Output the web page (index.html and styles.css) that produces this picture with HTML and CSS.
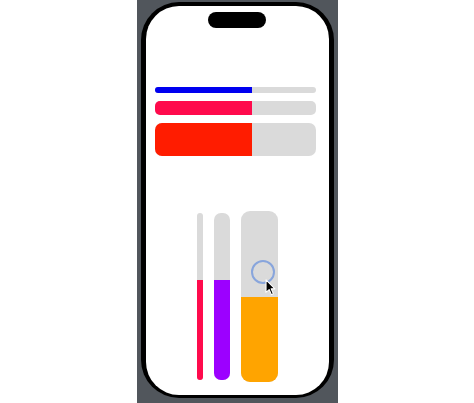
FILE: index.html
```html
<!DOCTYPE html>
<html lang="en">
<head>
  <meta charset="UTF-8">
  <meta name="viewport" content="width=device-width, initial-scale=1.0">
  <title>Progress Sliders</title>
  <link rel="stylesheet" href="styles.css">
</head>
<body>
  <div class="phone">
    <div class="bezel">
      <div class="screen">
        <div class="island"></div>

        <div class="bars">
          <div class="bar bar-thin"><div class="fill" style="width: 60%"></div></div>
          <div class="bar bar-medium"><div class="fill" style="width: 60%"></div></div>
          <div class="bar bar-large"><div class="fill" style="width: 60%"></div></div>
        </div>

        <div class="sliders">
          <div class="vslider vslider-thin"><div class="vfill" style="height: 60%"></div></div>
          <div class="vslider vslider-medium"><div class="vfill" style="height: 60%"></div></div>
          <div class="vslider vslider-large">
            <div class="vfill" style="height: 50%"></div>
            <div class="touch"></div>
            <svg class="pointer" width="11" height="17" viewBox="0 0 12 19">
              <path d="M1 1 L1 15 L4.5 11.8 L7 17.5 L9.2 16.5 L6.8 11 L11 11 Z" fill="#000" stroke="#fff" stroke-width="1.2" stroke-linejoin="round"></path>
            </svg>
          </div>
        </div>
      </div>
    </div>
  </div>
</body>
</html>
```

FILE: styles.css
```css
:root {
  --frame: #51565c;
  --track: #dadada;
  --blue: #0000f0;
  --pink: #ff0a4c;
  --red: #ff1c00;
  --purple: #9c00ff;
  --orange: #ffa400;
}

* {
  margin: 0;
  padding: 0;
  box-sizing: border-box;
}

body {
  background-color: #ffffff;
  height: 403px;
  overflow: hidden;
  font-family: 'Inter', sans-serif;
}

.phone {
  width: 201px;
  height: 403px;
  margin: 0 auto;
  padding: 2px 4px 5px;
  background-color: var(--frame);
}

.bezel {
  height: 100%;
  padding: 4px 5px 3px;
  background-color: #000000;
  border-radius: 38px;
}

.screen {
  height: 100%;
  background-color: #ffffff;
  border-radius: 33px;
  display: flex;
  flex-direction: column;
  align-items: center;
}

.island {
  width: 58px;
  height: 16px;
  margin-top: 6px;
  background-color: #000000;
  border-radius: 8px;
}

/* horizontal bars */
.bars {
  width: 161px;
  margin-top: 59px;
  margin-right: 3px;
  display: flex;
  flex-direction: column;
  gap: 8px;
}

.bar {
  background-color: var(--track);
  overflow: hidden;
}

.bar .fill {
  height: 100%;
}

.bar-thin {
  height: 6px;
  border-radius: 3px;
}

.bar-thin .fill {
  background-color: var(--blue);
}

.bar-medium {
  height: 14px;
  border-radius: 5px;
}

.bar-medium .fill {
  background-color: var(--pink);
}

.bar-large {
  height: 33px;
  border-radius: 7px;
}

.bar-large .fill {
  background-color: var(--red);
}

/* vertical sliders */
.sliders {
  margin-top: 55px;
  display: flex;
  align-items: center;
  gap: 11px;
}

.vslider {
  position: relative;
  background-color: var(--track);
  display: flex;
  flex-direction: column;
  justify-content: flex-end;
}

.vslider-thin {
  width: 6px;
  height: 167px;
  border-radius: 3px;
  overflow: hidden;
}

.vslider-thin .vfill {
  background-color: var(--pink);
}

.vslider-medium {
  width: 16px;
  height: 167px;
  border-radius: 7px;
  overflow: hidden;
}

.vslider-medium .vfill {
  background-color: var(--purple);
}

.vslider-large {
  width: 37px;
  height: 171px;
  border-radius: 9px;
}

.vslider-large .vfill {
  background-color: var(--orange);
  border-radius: 0 0 9px 9px;
}

.touch {
  position: absolute;
  left: 10px;
  top: 49px;
  width: 24px;
  height: 24px;
  border: 2px solid #88a5dc;
  border-radius: 50%;
}

.pointer {
  position: absolute;
  left: 24px;
  top: 68px;
}
```
